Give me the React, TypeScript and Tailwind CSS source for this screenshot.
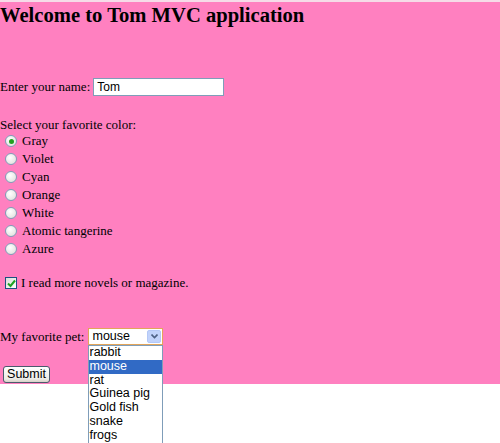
import { useState } from "react";

const colors = ["Gray", "Violet", "Cyan", "Orange", "White", "Atomic tangerine", "Azure"];
const pets = ["rabbit", "mouse", "rat", "Guinea pig", "Gold fish", "snake", "frogs"];

const Radio = ({ checked }: { checked: boolean }) => (
  <span className="w-[12px] h-[12px] rounded-full border border-[#7f9db9] bg-[radial-gradient(circle_at_40%_35%,#ffffff,#dcdcd8)] flex items-center justify-center">
    {checked && <span className="w-[5px] h-[5px] rounded-full bg-[#21a121]" />}
  </span>
);

const App = () => {
  const [color] = useState("Gray");
  const [pet] = useState("mouse");

  return (
    <div className="relative w-[500px] h-[443px] bg-white font-['Liberation_Serif',serif] text-[13px] text-black">
      <div className="h-[384px] bg-[#ff80c0] border-t-2 border-[#f6dbe8]">
        <h1 className="text-[20.6px] font-bold leading-[24px] mt-[1px]">Welcome to Tom MVC application</h1>

        <div className="flex items-center h-[18px] mt-[51px]">
          <span>Enter your name:</span>
          <div className="ml-[3px] w-[131px] h-[18px] border border-[#7f9db9] bg-white flex items-center px-[3px] font-['Liberation_Sans',sans-serif] text-[12px]">
            Tom
          </div>
        </div>

        <div className="mt-[21px] leading-[15px]">Select your favorite color:</div>
        <div className="flex flex-col">
          {colors.map((c) => (
            <div key={c} className="flex items-center h-[18px] pl-[5px] gap-[5px]">
              <Radio checked={c === color} />
              <span>{c}</span>
            </div>
          ))}
        </div>

        <div className="flex items-center h-[18px] mt-[16px] pl-[5px] gap-[4px]">
          <span className="w-[12px] h-[12px] border border-[#1c5180] bg-[linear-gradient(135deg,#dcdcd7,#ffffff)] flex items-center justify-center">
            <svg width="9" height="9" viewBox="0 0 9 9">
              <path d="M1 4.5 L3.5 7 L8 1.5" fill="none" stroke="#21a121" strokeWidth="2" />
            </svg>
          </span>
          <span>I read more novels or magazine.</span>
        </div>

        <div className="flex items-center h-[17px] mt-[36px]">
          <span>My favorite pet:</span>
          <div className="relative ml-[4px] w-[75px]">
            <div className="w-[75px] h-[17px] border border-[#e3a55a] bg-white flex items-center justify-between pl-[3px] pr-[1px] font-['Liberation_Sans',sans-serif] text-[12.5px]">
              <span>{pet}</span>
              <span className="w-[14px] h-[13px] rounded-[2px] bg-[#c1d3fb] border border-[#b4c8f6] flex items-center justify-center">
                <svg width="7" height="5" viewBox="0 0 7 5">
                  <path d="M0.5 0.5 L3.5 3.5 L6.5 0.5" fill="none" stroke="#4d6185" strokeWidth="1.6" />
                </svg>
              </span>
            </div>
            <ul className="absolute left-0 top-[17px] w-[75px] bg-white border border-[#7f9db9] font-['Liberation_Sans',sans-serif] text-[12.5px] z-10">
              {pets.map((p) => (
                <li
                  key={p}
                  className={`h-[13.8px] leading-[13.8px] ${p === pet ? "bg-[#316ac5] text-white" : ""}`}
                >
                  {p}
                </li>
              ))}
            </ul>
          </div>
        </div>

        <button className="ml-[3px] mt-[21px] w-[47px] h-[17px] rounded-[3px] border border-[#4a5a6c] bg-[linear-gradient(#ffffff,#ecebe6_80%,#d6d0c5)] font-['Liberation_Sans',sans-serif] text-[12.5px] leading-[15px] flex items-center justify-center">
          Submit
        </button>
      </div>
    </div>
  );
};

export default App;
